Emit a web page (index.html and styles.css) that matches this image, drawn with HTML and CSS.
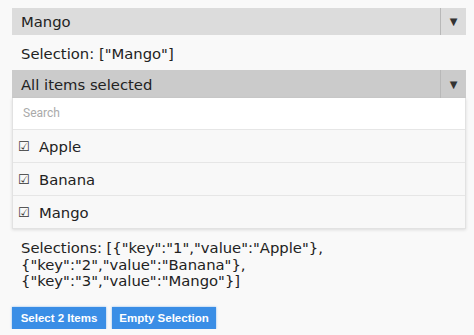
FILE: index.html
```html
<!DOCTYPE html>
<html lang="en">
<head>
  <meta charset="UTF-8" />
  <title>Select demo</title>
  <meta name="viewport" content="width=device-width,initial-scale=1" />
  <link rel="stylesheet" href="styles.css">
</head>
<body>

<div class="select single">
  <div class="select-label">Mango</div>
  <div class="select-arrow">&#9660;</div>
</div>
<p class="selection">Selection: ["Mango"]</p>

<div class="select multi open">
  <div class="select-label">All items selected</div>
  <div class="select-arrow">&#9660;</div>
</div>
<div class="menu">
  <div class="search">Search</div>
  <div class="item"><span class="check">&#9745;</span>Apple</div>
  <div class="item"><span class="check">&#9745;</span>Banana</div>
  <div class="item"><span class="check">&#9745;</span>Mango</div>
</div>
<p class="selections">Selections: [{"key":"1","value":"Apple"},<br>{"key":"2","value":"Banana"},<br>{"key":"3","value":"Mango"}]</p>

<div class="buttons">
  <button class="btn">Select 2 Items</button>
  <button class="btn wide">Empty Selection</button>
</div>

</body>
</html>
```

FILE: styles.css
```css
body {
  margin:0; padding:8px 8px 0 12px;
  font-family: "DejaVu Sans", Verdana, sans-serif; font-size:14.8px;
  background:#f9f9f9; color:#222;
}

/* SELECT BARS */
.select {
  display:flex; align-items:center;
  background:#dcdcdc; height:27px;
}
.select.multi { background:#cbcbcb; height:28px; }
.select-label { flex:1; padding-left:9px; }
.select-arrow {
  width:25px; align-self:stretch;
  border-left:1px solid #b8b8b8;
  display:flex; align-items:center; justify-content:center;
  font-size:10px; color:#333;
}

.selection { margin:0; padding:9px 9px 7px; line-height:19px; }

/* DROPDOWN */
.menu {
  background:#fff; border:1px solid #e2e2e2; border-top:none;
  box-shadow:0 1px 3px rgba(0,0,0,0.12);
}
.search {
  height:31px; line-height:31px; padding-left:10px;
  font-family: Roboto, Arial, sans-serif; font-size:12px; color:#aaa;
  border-bottom:1px solid #e6e6e6;
}
.item {
  height:32px; display:flex; align-items:center;
  background:#f8f8f8; border-bottom:1px solid #e6e6e6;
}
.item:last-child { border-bottom:none; }
.check { width:21px; padding-left:5px; font-size:13px; color:#333; }

.selections { margin:11px 0 0; padding:0 9px; line-height:16.5px; }

/* BUTTONS */
.buttons { display:flex; gap:6px; margin-top:17px; }
.btn {
  width:94px; height:22px; padding:0;
  background:#3a8ee6; color:#fff; border:none;
  font-family: "Liberation Sans", Arial, sans-serif; font-size:11.5px; font-weight:bold;
  box-shadow:0 0 2px rgba(58,142,230,0.6);
}
.btn.wide { width:104px; }
```
